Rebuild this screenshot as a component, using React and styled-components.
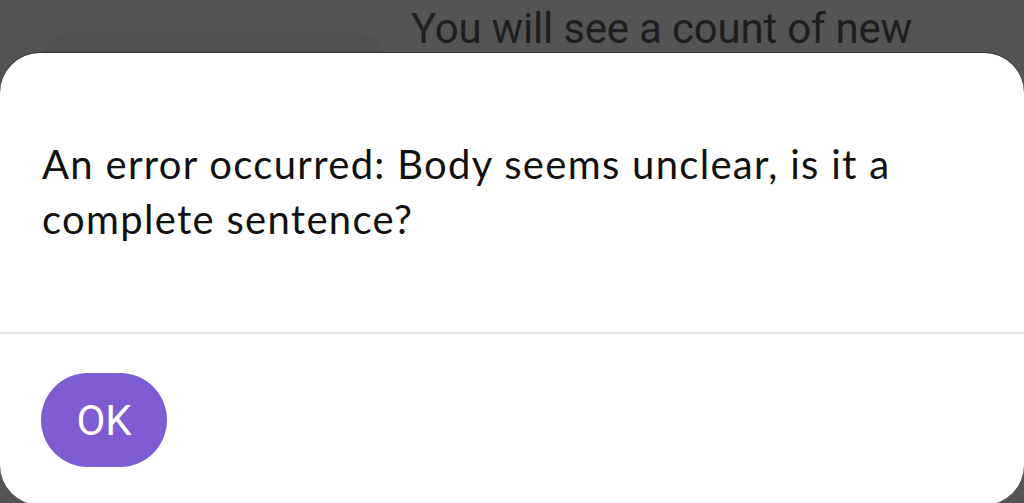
import React from "react";
import styled, { createGlobalStyle } from "styled-components";

const Global = createGlobalStyle`
  html, body { margin: 0; padding: 0; }
  body { width: 1024px; height: 503px; overflow: hidden; background: #545454; }
  * { box-sizing: border-box; }
`;

const Page = styled.div`
  position: relative;
  width: 1024px;
  height: 503px;
  background: #545454;
  overflow: hidden;
`;

const BackRow = styled.div`
  display: flex;
  align-items: flex-start;
  gap: 26px;
  padding-left: 40px;
`;

const BackCard = styled.div`
  width: 345px;
  height: 120px;
  margin-top: 31px;
  border-radius: 34px;
  background: #4f5052;
`;

const BackText = styled.div`
  font-family: Roboto, "Liberation Sans", sans-serif;
  font-size: 42px;
  line-height: 52px;
  letter-spacing: -0.2px;
  color: #1e1e1e;
  margin-top: 3px;
  white-space: nowrap;
`;

const Sheet = styled.div`
  position: absolute;
  left: 0;
  right: 0;
  top: 53px;
  height: 452px;
  background: #ffffff;
  border-radius: 40px;
  box-shadow: 0 -1px 0 rgba(0, 0, 0, 0.35);
  display: flex;
  flex-direction: column;
`;

const Body = styled.div`
  padding: 84px 42px 85px;
  font-family: Lato, "Liberation Sans", sans-serif;
  font-size: 40px;
  line-height: 55px;
  letter-spacing: 1.3px;
  color: #111111;
`;

const Divider = styled.div`
  height: 2px;
  background: #e3e3e3;
`;

const Actions = styled.div`
  display: flex;
  padding: 39px 41px 0;
`;

const Button = styled.button`
  width: 126px;
  height: 94px;
  border: none;
  border-radius: 47px;
  background: #7e5cd1;
  color: #ffffff;
  font-family: Roboto, "Liberation Sans", sans-serif;
  font-size: 42px;
  padding: 0;
  cursor: pointer;
`;

export default function App() {
  return (
    <Page>
      <Global />
      <BackRow>
        <BackCard />
        <BackText>You will see a count of new</BackText>
      </BackRow>
      <Sheet>
        <Body>
          An error occurred: Body seems unclear, is it a
          <br />
          complete sentence?
        </Body>
        <Divider />
        <Actions>
          <Button>OK</Button>
        </Actions>
      </Sheet>
    </Page>
  );
}
